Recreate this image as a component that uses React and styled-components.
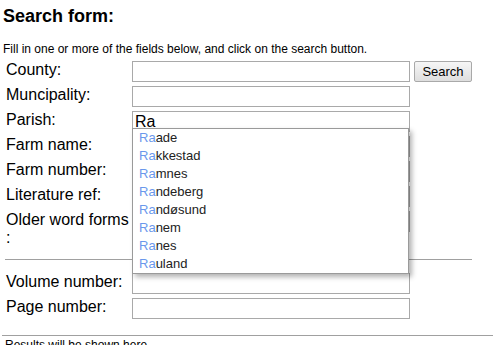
import React, { useState } from 'react';
import styled, { createGlobalStyle } from 'styled-components';

const GlobalStyle = createGlobalStyle`
  html, body {
    margin: 0;
    padding: 0;
    background: #ffffff;
  }
  body {
    font-family: "Liberation Sans", Arial, sans-serif;
    color: #000000;
  }
`;

const Page = styled.div`
  padding: 6px 0 0 3px;
  width: 490px;
  overflow: hidden;
`;

const Heading = styled.h2`
  margin: 0;
  font-size: 18px;
  line-height: 21px;
  font-weight: bold;
`;

const Intro = styled.p`
  margin: 15px 0 0;
  font-size: 12px;
  line-height: 14px;
`;

const Form = styled.form`
  margin: 5px 0 0 2px;
  width: 467px;
`;

const Row = styled.div`
  display: grid;
  grid-template-columns: 127px 278px auto;
  align-items: start;
  margin-bottom: 4px;
`;

const Label = styled.label`
  box-sizing: border-box;
  padding: 0 0 0 1px;
  font-size: 16px;
  line-height: 18px;
  color: #000;
  white-space: nowrap;
`;

const FieldWrap = styled.div`
  position: relative;
`;

const TextInput = styled.input`
  box-sizing: border-box;
  display: block;
  width: 278px;
  height: 21px;
  margin: 0;
  padding: 0 2px;
  border: 1px solid #a9a9a9;
  font-family: "Liberation Sans", Arial, sans-serif;
  font-size: 16px;
  color: #000;
  background: #fff;
  outline: none;
`;

const SearchButton = styled.button`
  box-sizing: border-box;
  width: 58px;
  height: 21px;
  margin-left: 4px;
  padding: 0;
  border: 1px solid #a9a9a9;
  border-radius: 2px;
  background: linear-gradient(#f6f6f6, #dedede);
  font-family: "Liberation Sans", Arial, sans-serif;
  font-size: 13px;
  color: #000;
`;

const Rule = styled.hr`
  margin: ${p => p.$top}px 0 ${p => p.$bottom}px ${p => p.$left || 0}px;
  border: 0;
  border-top: 1px solid #a0a0a0;
  height: 0;
`;

const Suggestions = styled.ul`
  position: absolute;
  top: 17px;
  left: 0;
  z-index: 5;
  box-sizing: border-box;
  width: 277px;
  margin: 0;
  padding: 0;
  list-style: none;
  background: #fff;
  border: 1px solid #9a9a9a;
  box-shadow: 3px 3px 5px rgba(0, 0, 0, 0.3);
`;

const Suggestion = styled.li`
  padding: 0 6px;
  font-size: 13px;
  line-height: 18px;
  color: #222;
  white-space: nowrap;
`;

const Match = styled.span`
  color: #6a98ec;
`;

const Results = styled.div`
  margin-left: 2px;
  font-size: 12px;
  line-height: 14px;
`;

const parishes = ['Raade', 'Rakkestad', 'Ramnes', 'Randeberg', 'Randøsund', 'Ranem', 'Ranes', 'Rauland'];

const upperFields = [
  ['Farm name:'],
  ['Farm number:'],
  ['Literature ref:'],
  ['Older word forms', ':'],
];
const lowerFields = [['Volume number:'], ['Page number:']];

function FieldRow({ lines }) {
  return (
    <Row>
      <Label>
        {lines.map((line, i) => (
          <React.Fragment key={i}>
            {i > 0 && <br />}
            {line}
          </React.Fragment>
        ))}
      </Label>
      <TextInput />
    </Row>
  );
}

export default function App() {
  const [parish, setParish] = useState('Ra');
  const typed = parish.length;

  return (
    <>
      <GlobalStyle />
      <Page>
        <Heading>Search form:</Heading>
        <Intro>Fill in one or more of the fields below, and click on the search button.</Intro>
        <Form onSubmit={e => e.preventDefault()}>
          <Row>
            <Label>County:</Label>
            <TextInput />
            <SearchButton type="submit">Search</SearchButton>
          </Row>
          <Row>
            <Label>Muncipality:</Label>
            <TextInput />
          </Row>
          <Row>
            <Label>Parish:</Label>
            <FieldWrap>
              <TextInput value={parish} onChange={e => setParish(e.target.value)} />
              <Suggestions>
                {parishes.map(name => (
                  <Suggestion key={name}>
                    <Match>{name.slice(0, typed)}</Match>
                    {name.slice(typed)}
                  </Suggestion>
                ))}
              </Suggestions>
            </FieldWrap>
          </Row>
          {upperFields.map(lines => (
            <FieldRow key={lines[0]} lines={lines} />
          ))}
          <Rule $top={12} $bottom={13} />
          {lowerFields.map(lines => (
            <FieldRow key={lines[0]} lines={lines} />
          ))}
        </Form>
        <Rule $top={16} $bottom={2} $left={-1} />
        <Results>Results will be shown here.</Results>
      </Page>
    </>
  );
}
